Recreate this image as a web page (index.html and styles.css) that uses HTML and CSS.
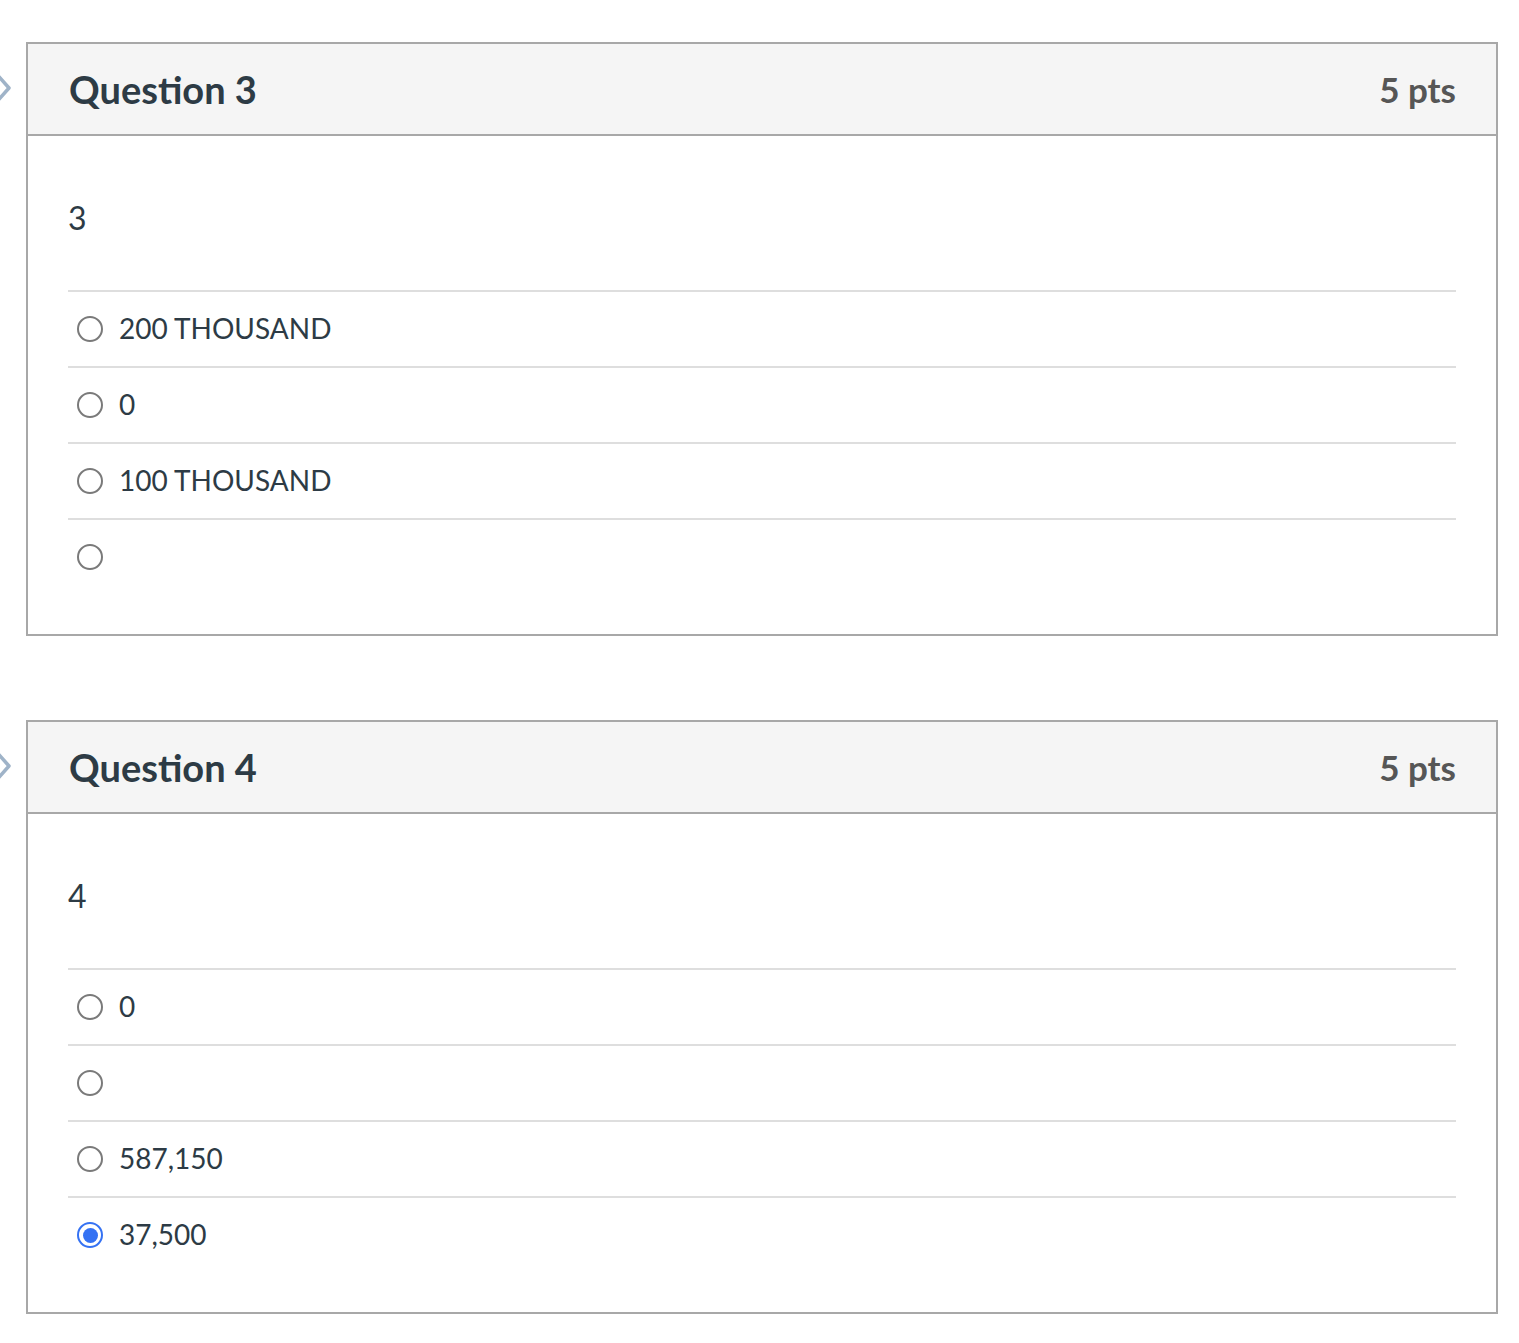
FILE: index.html
```html
<!DOCTYPE html>
<html>
<head>
<meta charset="utf-8">
<link rel="stylesheet" href="styles.css">
</head>
<body>
<div class="page">
  <div class="question">
    <svg class="flag" width="14" height="44" viewBox="0 0 14 44"><polyline points="-8,3 9,22 -8,41" fill="none" stroke="#9fb3c8" stroke-width="3.5" stroke-linejoin="round"/></svg>
    <div class="q-header">
      <h2 class="q-title">Question 3</h2>
      <span class="q-pts">5 pts</span>
    </div>
    <div class="q-body">
      <div class="q-text">3</div>
      <div class="answers">
        <label class="answer"><span class="radio"></span><span class="a-text">200 THOUSAND</span></label>
        <label class="answer"><span class="radio"></span><span class="a-text">0</span></label>
        <label class="answer"><span class="radio"></span><span class="a-text">100 THOUSAND</span></label>
        <label class="answer"><span class="radio"></span><span class="a-text"></span></label>
      </div>
    </div>
  </div>

  <div class="question">
    <svg class="flag" width="14" height="44" viewBox="0 0 14 44"><polyline points="-8,3 9,22 -8,41" fill="none" stroke="#9fb3c8" stroke-width="3.5" stroke-linejoin="round"/></svg>
    <div class="q-header">
      <h2 class="q-title">Question 4</h2>
      <span class="q-pts">5 pts</span>
    </div>
    <div class="q-body">
      <div class="q-text">4</div>
      <div class="answers">
        <label class="answer"><span class="radio"></span><span class="a-text">0</span></label>
        <label class="answer"><span class="radio"></span><span class="a-text"></span></label>
        <label class="answer"><span class="radio"></span><span class="a-text">587,150</span></label>
        <label class="answer"><span class="radio checked"></span><span class="a-text">37,500</span></label>
      </div>
    </div>
  </div>
</div>
</body>
</html>
```

FILE: styles.css
```css
* { box-sizing: border-box; }

body {
  margin: 0;
  background: #ffffff;
  font-family: Lato, "Open Sans", sans-serif;
  color: #2d3b45;
}

.page {
  padding: 42px 21px 0 26px;
  display: flex;
  flex-direction: column;
  gap: 84px;
}

.question {
  position: relative;
  border: 2px solid #a8a8a8;
  background: #ffffff;
}

.flag {
  position: absolute;
  left: -28px;
  top: 22px;
  filter: blur(0.5px);
}

.q-header {
  height: 92px;
  background: #f5f5f5;
  border-bottom: 2px solid #a8a8a8;
  display: flex;
  align-items: center;
  justify-content: space-between;
  padding: 0 40px 0 41px;
}

.q-title {
  margin: 0;
  font-size: 38px;
  font-weight: 700;
  color: #2d3b45;
}

.q-pts {
  font-size: 35px;
  font-weight: 700;
  color: #565656;
}

.q-body {
  padding: 0 40px 40px 40px;
}

.q-text {
  font-size: 32px;
  line-height: 48px;
  padding: 58px 0 48px 0;
}

.answer {
  display: flex;
  align-items: center;
  gap: 16px;
  height: 76px;
  border-top: 2px solid #dedede;
  padding-left: 9px;
  font-size: 28px;
  line-height: 1;
}

.a-text {
  position: relative;
  top: -1px;
}

.radio {
  width: 26px;
  height: 26px;
  border-radius: 50%;
  border: 2px solid #7a7a7a;
  background: #fff;
  flex: none;
  display: flex;
  align-items: center;
  justify-content: center;
}

.radio.checked {
  border: 2.5px solid #3572f3;
}

.radio.checked::after {
  content: "";
  width: 15px;
  height: 15px;
  border-radius: 50%;
  background: #3572f3;
}
```
